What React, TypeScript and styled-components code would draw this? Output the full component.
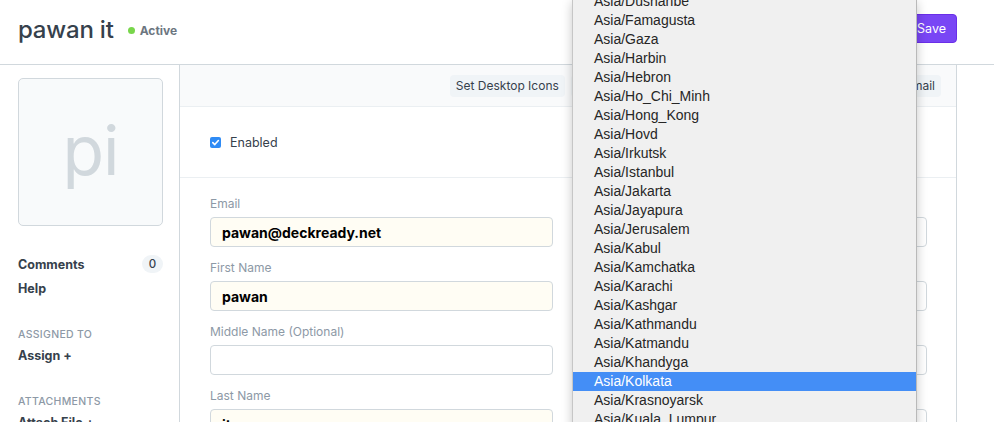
import styled, { createGlobalStyle } from "styled-components";

const GlobalStyle = createGlobalStyle`
  * { box-sizing: border-box; }
  body {
    margin: 0;
    background: #fff;
    font-family: Inter, "Noto Sans", sans-serif;
    color: #36414c;
    overflow: hidden;
  }
`;

const zones = [
  "Asia/Dushanbe",
  "Asia/Famagusta",
  "Asia/Gaza",
  "Asia/Harbin",
  "Asia/Hebron",
  "Asia/Ho_Chi_Minh",
  "Asia/Hong_Kong",
  "Asia/Hovd",
  "Asia/Irkutsk",
  "Asia/Istanbul",
  "Asia/Jakarta",
  "Asia/Jayapura",
  "Asia/Jerusalem",
  "Asia/Kabul",
  "Asia/Kamchatka",
  "Asia/Karachi",
  "Asia/Kashgar",
  "Asia/Kathmandu",
  "Asia/Katmandu",
  "Asia/Khandyga",
  "Asia/Kolkata",
  "Asia/Krasnoyarsk",
  "Asia/Kuala_Lumpur",
];

const leftFields = [
  { label: "Email", value: "pawan@deckready.net" },
  { label: "First Name", value: "pawan" },
  { label: "Middle Name (Optional)", value: "" },
  { label: "Last Name", value: "it" },
];

const rightFields = ["Username", "Language", "Time Zone", "Full Name"];

export default function App() {
  return (
    <Page>
      <GlobalStyle />
      <PageHead>
        <TitleRow>
          <Title>pawan it</Title>
          <Indicator>Active</Indicator>
        </TitleRow>
        <SaveButton>Save</SaveButton>
      </PageHead>

      <Layout>
        <Sidebar>
          <Avatar>pi</Avatar>
          <SideList>
            <SideItem>
              Comments <Badge>0</Badge>
            </SideItem>
            <SideItem>Help</SideItem>
          </SideList>
          <SideHeading>Assigned To</SideHeading>
          <SideItem>Assign +</SideItem>
          <SideHeading>Attachments</SideHeading>
          <SideItem>Attach File +</SideItem>
        </Sidebar>

        <MainPanel>
          <Toolbar>
            <ToolButton>Set Desktop Icons</ToolButton>
            <ToolButton>Set User Permissions</ToolButton>
            <ToolButton>Reset OTP Secret</ToolButton>
            <ToolButton>Create User Email</ToolButton>
          </Toolbar>

          <CheckSection>
            <CheckBox>
              <svg width="9" height="9" viewBox="0 0 10 10">
                <path
                  d="M2 5.2 L4.2 7.3 L8.2 2.8"
                  fill="none"
                  stroke="#fff"
                  strokeWidth="1.8"
                  strokeLinecap="round"
                  strokeLinejoin="round"
                />
              </svg>
            </CheckBox>
            <CheckLabel>Enabled</CheckLabel>
          </CheckSection>

          <FieldSection>
            <Column>
              {leftFields.map((f) => (
                <Field key={f.label}>
                  <FieldLabel>{f.label}</FieldLabel>
                  <Input $filled={f.value !== ""}>{f.value}</Input>
                </Field>
              ))}
            </Column>
            <Column>
              {rightFields.map((label) => (
                <Field key={label}>
                  <FieldLabel>{label}</FieldLabel>
                  <Input $filled={false} />
                </Field>
              ))}
            </Column>
          </FieldSection>
        </MainPanel>
      </Layout>

      <SelectMenu>
        <MenuList>
          {zones.map((z) => (
            <MenuItem key={z} $selected={z === "Asia/Kolkata"}>
              {z}
            </MenuItem>
          ))}
        </MenuList>
      </SelectMenu>
    </Page>
  );
}

const Page = styled.div`
  position: relative;
  width: 994px;
  height: 422px;
  overflow: hidden;
`;

const PageHead = styled.header`
  height: 65px;
  border-bottom: 1px solid #d1d8dd;
  display: flex;
  align-items: center;
  justify-content: space-between;
  padding: 0 37px 8px 18px;
`;

const TitleRow = styled.div`
  display: flex;
  align-items: center;
  gap: 14px;
  margin-top: 2px;
`;

const Title = styled.h1`
  margin: 0;
  font-size: 24px;
  font-weight: 500;
  letter-spacing: -0.2px;
  color: #36414c;
`;

const Indicator = styled.span`
  display: flex;
  align-items: center;
  gap: 5px;
  font-size: 12px;
  font-weight: 700;
  color: #6c7680;
  padding-top: 2px;

  &::before {
    content: "";
    width: 7px;
    height: 7px;
    border-radius: 50%;
    background: #78d64b;
  }
`;

const SaveButton = styled.button`
  height: 29px;
  padding: 0 10px 0 12px;
  border: 1px solid #6a2fe8;
  border-radius: 4px;
  background: #7946f5;
  color: #fff;
  font-family: inherit;
  font-size: 12.5px;
`;

const Layout = styled.div`
  display: grid;
  grid-template-columns: 161px 778px;
  padding-left: 18px;
`;

const Sidebar = styled.aside`
  padding: 13px 16px 0 0;
`;

const Avatar = styled.div`
  width: 145px;
  height: 148px;
  border: 1px solid #d1d8dd;
  border-radius: 5px;
  background: #f8fafb;
  display: flex;
  align-items: center;
  justify-content: center;
  font-size: 68px;
  color: #d1d8dd;
  letter-spacing: -1px;
  padding-bottom: 4px;
`;

const SideList = styled.div`
  margin-top: 28px;
  display: flex;
  flex-direction: column;
  gap: 4px;
`;

const SideItem = styled.div`
  display: flex;
  align-items: center;
  justify-content: space-between;
  height: 20px;
  font-size: 12.5px;
  font-weight: 700;
  color: #36414c;
  white-space: nowrap;
`;

const Badge = styled.span`
  min-width: 21px;
  height: 18px;
  border-radius: 9px;
  background: #f0f4f7;
  color: #36414c;
  font-size: 11.5px;
  font-weight: 500;
  display: flex;
  align-items: center;
  justify-content: center;
`;

const SideHeading = styled.div`
  margin: 30px 0 4px;
  font-size: 10.5px;
  text-transform: uppercase;
  letter-spacing: 0.3px;
  color: #8d99a6;
  font-weight: 500;
`;

const MainPanel = styled.main`
  border-left: 1px solid #d1d8dd;
  border-right: 1px solid #d1d8dd;
  height: 360px;
`;

const Toolbar = styled.div`
  height: 42px;
  background: #f9fafb;
  border-bottom: 1px solid #ebeff2;
  display: flex;
  align-items: center;
  justify-content: flex-end;
  gap: 6px;
  padding-right: 15px;
`;

const ToolButton = styled.button`
  height: 22px;
  padding: 0 6px;
  border: none;
  border-radius: 4px;
  background: #f0f4f7;
  color: #36414c;
  font-family: inherit;
  font-size: 12px;
  white-space: nowrap;
`;

const CheckSection = styled.section`
  height: 71px;
  border-bottom: 1px solid #ebeff2;
  display: flex;
  align-items: center;
  padding: 0 30px;
  gap: 9px;
`;

const CheckBox = styled.span`
  width: 11px;
  height: 11px;
  border-radius: 2px;
  background: #2f8bf5;
  display: flex;
  align-items: center;
  justify-content: center;
`;

const CheckLabel = styled.span`
  font-size: 12.5px;
  color: #36414c;
`;

const FieldSection = styled.section`
  display: grid;
  grid-template-columns: 1fr 1fr;
  column-gap: 32px;
  padding: 17px 29px 0 30px;
`;

const Column = styled.div`
  display: flex;
  flex-direction: column;
`;

const Field = styled.div`
  height: 64px;
`;

const FieldLabel = styled.div`
  height: 16px;
  margin-bottom: 6px;
  display: flex;
  align-items: center;
  font-size: 12px;
  color: #8d99a6;
`;

const Input = styled.div<{ $filled: boolean }>`
  height: 30px;
  border: 1px solid #d1d8dd;
  border-radius: 4px;
  background: ${(p) => (p.$filled ? "#fffdf4" : "#fff")};
  display: flex;
  align-items: center;
  padding: 0 11px;
  font-size: 14px;
  font-weight: 700;
  color: #000;
`;

const SelectMenu = styled.div`
  position: absolute;
  left: 572px;
  top: 0;
  width: 345px;
  height: 430px;
  background: #f0f0f0;
  border-left: 1px solid #c6c6c6;
  border-right: 1px solid #b9b9b9;
  box-shadow: 0 2px 10px rgba(0, 0, 0, 0.22);
  overflow: hidden;
  font-family: "Liberation Sans", Arial, sans-serif;
`;

const MenuList = styled.ul`
  list-style: none;
  margin: -8px 0 0;
  padding: 0;
`;

const MenuItem = styled.li<{ $selected: boolean }>`
  height: 19px;
  line-height: 19px;
  padding-left: 21px;
  font-size: 14px;
  color: ${(p) => (p.$selected ? "#fff" : "#262626")};
  background: ${(p) => (p.$selected ? "#448ef6" : "transparent")};
`;
